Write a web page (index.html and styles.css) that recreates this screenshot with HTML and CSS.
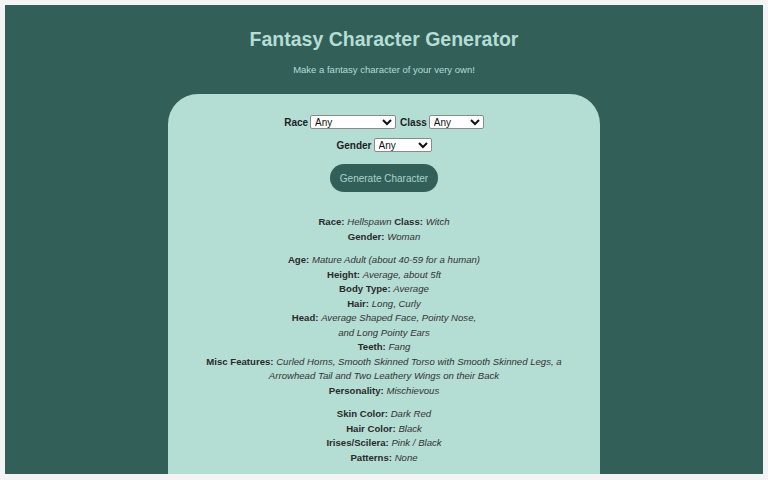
FILE: index.html
```html
<!DOCTYPE html>
<html>
<head>
<meta charset="utf-8">
<link rel="stylesheet" href="styles.css">
</head>
<body>
<div class="app">
  <h1 class="title">Fantasy Character Generator</h1>
  <p class="subtitle">Make a fantasy character of your very own!</p>
  <div class="card">
    <div class="row">
      <label class="lbl">Race</label>
      <select class="sel sel-race"><option>Any</option></select>
      <label class="lbl">Class</label>
      <select class="sel sel-class"><option>Any</option></select>
    </div>
    <div class="row">
      <label class="lbl">Gender</label>
      <select class="sel sel-gender"><option>Any</option></select>
    </div>
    <button class="gen">Generate Character</button>
    <div class="result">
      <div class="group">
        <p><b>Race:</b> <i>Hellspawn</i> <b>Class:</b> <i>Witch</i></p>
        <p><b>Gender:</b> <i>Woman</i></p>
      </div>
      <div class="group">
        <p><b>Age:</b> <i>Mature Adult (about 40-59 for a human)</i></p>
        <p><b>Height:</b> <i>Average, about 5ft</i></p>
        <p><b>Body Type:</b> <i>Average</i></p>
        <p><b>Hair:</b> <i>Long</i>, <i>Curly</i></p>
        <p><b>Head:</b> <i>Average Shaped Face, Pointy Nose,<br>and Long Pointy Ears</i></p>
        <p><b>Teeth:</b> <i>Fang</i></p>
        <p><b>Misc Features:</b> <i>Curled Horns, Smooth Skinned Torso with Smooth Skinned Legs, a<br>Arrowhead Tail and Two Leathery Wings on their Back</i></p>
        <p><b>Personality:</b> <i>Mischievous</i></p>
      </div>
      <div class="group">
        <p><b>Skin Color:</b> <i>Dark Red</i></p>
        <p><b>Hair Color:</b> <i>Black</i></p>
        <p><b>Irises/Scilera:</b> <i>Pink / Black</i></p>
        <p><b>Patterns:</b> <i>None</i></p>
      </div>
    </div>
  </div>
</div>
</body>
</html>
```
FILE: styles.css
```css
html, body {
  margin: 0;
  padding: 0;
  background: #f4f4f4;
}
body {
  padding: 5px;
  font-family: "Liberation Sans", Arial, sans-serif;
}
.app {
  background: #335f59;
  height: 469px;
  overflow: hidden;
  display: flex;
  flex-direction: column;
  align-items: center;
  padding-top: 22px;
  box-sizing: border-box;
}
.title {
  margin: 0;
  font-size: 19.5px;
  line-height: 24px;
  font-weight: bold;
  color: #b4ddd4;
}
.subtitle {
  margin: 12px 0 0;
  font-size: 9.5px;
  line-height: 14px;
  color: #b4ddd4;
}
.card {
  margin-top: 17px;
  width: 432px;
  background: #b4ddd4;
  border-radius: 30px 30px 0 0;
  padding-top: 20px;
  padding-bottom: 40px;
  display: flex;
  flex-direction: column;
  align-items: center;
  color: #2c2c2c;
  flex-shrink: 0;
}
.row {
  display: flex;
  align-items: center;
  gap: 2px;
  height: 16px;
  margin-bottom: 7px;
}
.lbl {
  font-size: 10px;
  font-weight: bold;
  color: #1e1e1e;
  margin-left: 2px;
}
.lbl:first-child { margin-left: 0; }
.sel {
  font-family: "Liberation Sans", Arial, sans-serif;
  font-size: 10px;
  height: 14px;
  padding: 0;
  border: 1px solid #8a8a8a;
  border-radius: 2px;
  background: #fff;
  color: #111;
}
.sel-race { width: 86px; }
.sel-class { width: 55px; }
.sel-gender { width: 58px; }
.gen {
  margin-top: 4px;
  width: 108px;
  height: 28px;
  border: none;
  border-radius: 14px;
  background: #335f59;
  color: #a9d3ca;
  font-family: "Liberation Sans", Arial, sans-serif;
  font-size: 10px;
  padding: 0;
}
.result {
  margin-top: 23px;
  text-align: center;
  font-size: 9.6px;
  line-height: 14.5px;
}
.group {
  margin-bottom: 9px;
}
.group p {
  margin: 0;
}
.group b { color: #2a2a2a; }
.group i { color: #333; }
```
